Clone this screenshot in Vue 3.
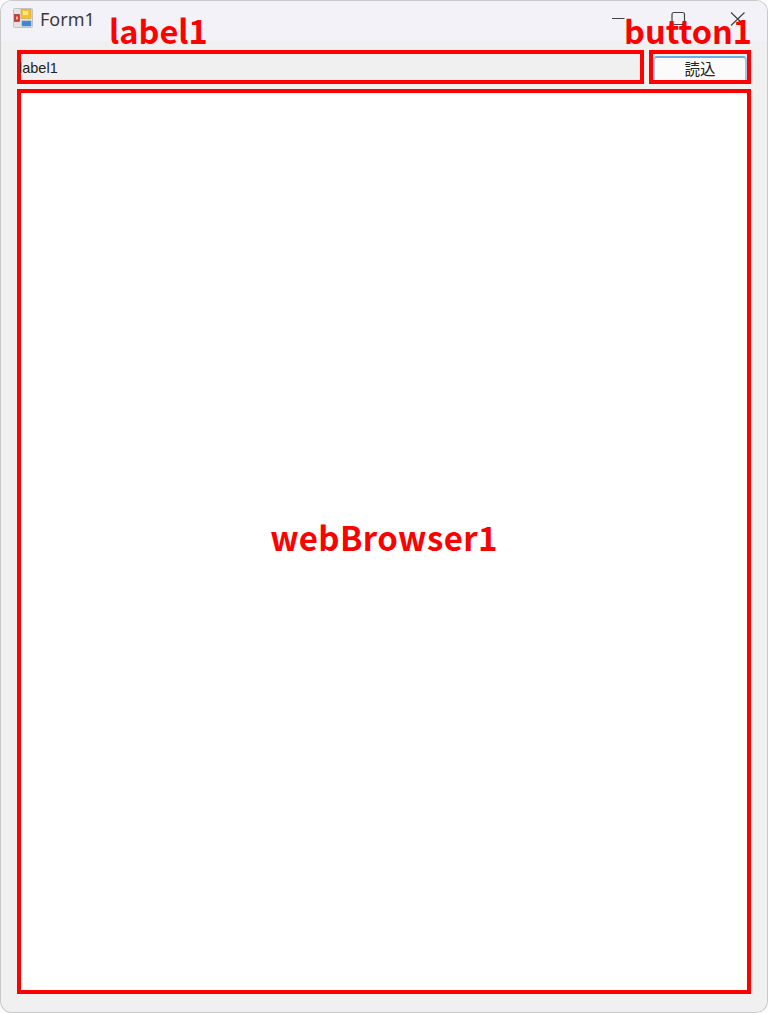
<script setup>
const title = 'Form1'
</script>

<template>
  <div class="page">
    <div class="window">
      <header class="titlebar">
        <svg class="appicon" width="20" height="20" viewBox="0 0 20 20">
          <rect x="0.5" y="0.5" width="19" height="19" rx="1" fill="#e4e2e2" stroke="#c4c2c4" />
          <rect x="8" y="1.5" width="10" height="9" fill="#f2c230" stroke="#c9a24a" stroke-width="0.6" />
          <rect x="10" y="3" width="5" height="4" fill="#fbe68a" />
          <rect x="1.5" y="6.5" width="5" height="7" fill="#d8352c" stroke="#9a2a2a" stroke-width="0.6" />
          <rect x="3" y="8.5" width="2" height="3" fill="#f3b0a8" />
          <rect x="9" y="13" width="9" height="5" fill="#3f86d8" stroke="#5d8fc4" stroke-width="0.6" />
        </svg>
        <span class="title">{{ title }}</span>
        <span class="note note-label">label1</span>
        <span class="note note-button">button1</span>
        <div class="controls">
          <svg width="16" height="16" viewBox="0 0 16 16" fill="none" stroke="#444" stroke-width="1.2">
            <path d="M0 7.5H12.5" />
          </svg>
          <svg width="16" height="16" viewBox="0 0 16 16" fill="none" stroke="#444" stroke-width="1.2">
            <rect x="1" y="1.5" width="12.5" height="12" rx="2" />
          </svg>
          <svg width="16" height="16" viewBox="0 0 16 16" fill="none" stroke="#444" stroke-width="1.2">
            <path d="M1 1.5L14.5 14.5M14.5 1.5L1 14.5" />
          </svg>
        </div>
      </header>
      <main class="client">
        <div class="box label-box"><span class="label-text">label1</span></div>
        <div class="box button-box"><button class="load" type="button">読込</button></div>
        <div class="box web-box"><span class="note note-web">webBrowser1</span></div>
      </main>
    </div>
  </div>
</template>

<style>
html, body { margin: 0; background: #fbfbfb; }
</style>

<style scoped>
.page {
  width: 768px;
  height: 1013px;
  padding: 1px 0 0 1px;
  box-sizing: border-box;
  overflow: hidden;
  font-family: "Noto Sans CJK JP", "Noto Sans", sans-serif;
}
.window {
  width: 766px;
  height: 1011px;
  box-sizing: border-box;
  border-radius: 11px;
  box-shadow: 0 0 0 1px #c9c9cb;
  background: #f0f0f0;
  overflow: hidden;
  display: flex;
  flex-direction: column;
}
.titlebar {
  position: relative;
  height: 40px;
  flex: none;
  background: #f3f2f8;
  display: flex;
  align-items: center;
  padding: 0 12px;
  box-sizing: border-box;
}
.appicon { flex: none; margin-top: -6px; }
.title {
  margin-left: 7px;
  margin-top: -4px;
  font-family: "Noto Sans", sans-serif;
  font-size: 18px;
  line-height: 24px;
  color: #3a3a3a;
}
.controls {
  margin-left: auto;
  display: flex;
  gap: 43px;
  margin-right: 9px;
  margin-top: -5px;
}
.note {
  font-family: "Noto Sans CJK JP", "Noto Sans", sans-serif;
  font-weight: 700;
  color: #ff0000;
  font-size: 33px;
  letter-spacing: 0.4px;
  line-height: 40px;
  white-space: nowrap;
}
.note-label { position: absolute; left: 108px; top: 9px; font-size: 32.5px; letter-spacing: 0; }
.note-button { position: absolute; left: 623px; top: 9px; z-index: 1; font-size: 32.5px; letter-spacing: 0; }
.client {
  flex: 1;
  display: grid;
  grid-template-columns: 627px 102px;
  grid-template-rows: 34px 905px;
  column-gap: 5px;
  row-gap: 5px;
  padding: 9px 0 0 16px;
}
.box {
  border: 4px solid #ff0000;
  box-sizing: border-box;
  min-width: 0;
}
.label-box {
  display: flex;
  align-items: center;
}
.label-text {
  margin-left: -2px;
  margin-top: 2px;
  font-family: "Liberation Sans", sans-serif;
  font-size: 14.5px;
  line-height: 18px;
  color: #222;
}
.button-box {
  padding: 2px 0 0;
  background: #f0f0f0;
  display: flex;
}
.load {
  flex: 1;
  margin: 0;
  padding: 0 0 3px;
  border: 0;
  border-top: 2px solid #6aaee6;
  border-left: 2px solid #9cc8ec;
  border-right: 2px solid #9cc8ec;
  border-radius: 4px 4px 0 0;
  background: #fbfbfb;
  font-family: "Noto Sans CJK JP", sans-serif;
  font-size: 15.5px;
  line-height: 20px;
  color: #222;
}
.web-box {
  grid-column: 1 / span 2;
  background: #fff;
  display: flex;
  align-items: center;
  justify-content: center;
  padding-bottom: 10px;
}
</style>
